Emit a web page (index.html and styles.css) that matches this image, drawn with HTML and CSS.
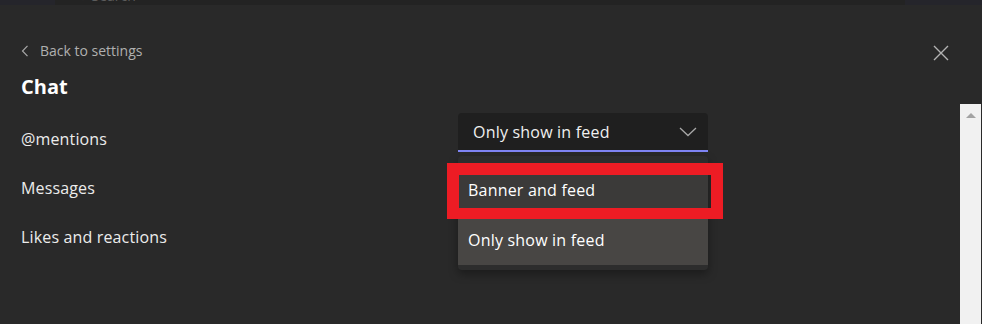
FILE: index.html
```html
<!DOCTYPE html>
<html lang="en">
<head>
    <meta charset="UTF-8">
    <meta name="viewport" content="width=device-width, initial-scale=1.0">
    <title>Chat notifications</title>
    <link rel="stylesheet" href="styles.css">
</head>
<body>
    <div class="topbar">
        <span class="topbar-side"></span>
        <span class="search">&lsaquo;&nbsp; Search</span>
        <span class="topbar-side topbar-right"></span>
    </div>

    <div class="header">
        <div class="head-row">
            <a class="back" href="#">
                <svg width="8" height="12" viewBox="0 0 8 12"><path d="M6.5 0.8 L1.5 6 L6.5 11.2" fill="none" stroke="#a8a8a8" stroke-width="1.2"/></svg>
                Back to settings
            </a>
            <button class="close" aria-label="Close">
                <svg width="16" height="16" viewBox="0 0 16 16"><path d="M1 1 L15 15 M15 1 L1 15" fill="none" stroke="#b3b3b3" stroke-width="1.4"/></svg>
            </button>
        </div>
        <h1>Chat</h1>
    </div>

    <div class="content">
        <div class="settings">
            <div class="row">
                <span class="label">@mentions</span>
                <div class="select-wrap">
                    <div class="select">
                        <span>Only show in feed</span>
                        <svg width="18" height="10" viewBox="0 0 18 10"><path d="M1 1 L9 8.5 L17 1" fill="none" stroke="#a8a8a8" stroke-width="1.3"/></svg>
                    </div>
                    <ul class="menu">
                        <li class="item item-hover">Banner and feed</li>
                        <li class="item item-selected">Only show in feed</li>
                    </ul>
                    <div class="highlight"></div>
                </div>
            </div>
            <div class="row">
                <span class="label">Messages</span>
            </div>
            <div class="row">
                <span class="label">Likes and reactions</span>
            </div>
        </div>
        <div class="scrollbar">
            <span class="arrow-up"></span>
        </div>
    </div>
</body>
</html>
```

FILE: styles.css
```css
body {
    margin: 0;
    background-color: #292929;
    color: #ffffff;
    font-family: "Open Sans", "Noto Sans", sans-serif;
    width: 982px;
    height: 324px;
    overflow: hidden;
}
.topbar {
    height: 5px;
    background-color: #232323;
    display: flex;
    overflow: hidden;
}
.topbar-side {
    width: 55px;
    background-color: #25252b;
}
.topbar-right {
    width: 77px;
    margin-left: auto;
}
.search {
    margin: -14px 0 0 25px;
    font-size: 14px;
    line-height: 20px;
    color: #5c5c5c;
}
.header {
    padding: 36px 33px 0 21px;
    height: 63px;
}
.head-row {
    display: flex;
    align-items: flex-start;
    justify-content: space-between;
}
.back {
    display: flex;
    align-items: center;
    gap: 11px;
    color: #b0b0b0;
    text-decoration: none;
    font-size: 14px;
    line-height: 20px;
}
.close {
    background: none;
    border: none;
    padding: 0;
    margin-top: 4px;
    width: 16px;
    height: 16px;
    cursor: pointer;
}
.close svg {
    display: block;
}
h1 {
    margin: 12px 0 0;
    font-size: 20px;
    line-height: 28px;
    font-weight: 700;
}
.content {
    display: flex;
    height: 220px;
}
.settings {
    flex: 1;
    padding: 9px 0 0 21px;
}
.row {
    display: flex;
    align-items: flex-start;
    height: 49px;
}
.label {
    width: 437px;
    padding-top: 2px;
    line-height: 49px;
    font-size: 16px;
    letter-spacing: 0.15px;
    color: #ececec;
}
.select-wrap {
    position: relative;
    width: 250px;
}
.select {
    height: 37px;
    background-color: #1f1f1f;
    border-bottom: 2px solid #7f85f5;
    border-radius: 4px 4px 0 0;
    display: flex;
    align-items: center;
    justify-content: space-between;
    padding: 1px 11px 0 15px;
    box-sizing: border-box;
    height: 39px;
    font-size: 16px;
    letter-spacing: 0.2px;
    color: #f0f0f0;
}
.menu {
    position: absolute;
    top: 43px;
    left: 0;
    width: 250px;
    margin: 0;
    padding: 9px 0 5px;
    list-style: none;
    background-color: #2d2d2d;
    border-radius: 4px;
    box-shadow: 0 4px 10px rgba(0, 0, 0, 0.35);
}
.item {
    height: 50px;
    line-height: 51px;
    padding-left: 10px;
    font-size: 16px;
    letter-spacing: 0.2px;
    color: #ffffff;
}
.item-hover {
    background-color: #3b3a39;
}
.item-selected {
    background-color: #484644;
}
.highlight {
    position: absolute;
    left: -11px;
    top: 50px;
    width: 276px;
    height: 56px;
    box-sizing: border-box;
    border: 12px solid #ed1c24;
    border-bottom-width: 11px;
}
.scrollbar {
    width: 21px;
    margin-right: 1px;
    background-color: #f1f1f1;
}
.arrow-up {
    display: block;
    width: 0;
    height: 0;
    margin: 9px 0 0 6px;
    border-left: 5px solid transparent;
    border-right: 5px solid transparent;
    border-bottom: 5px solid #a3a3a3;
}
```
